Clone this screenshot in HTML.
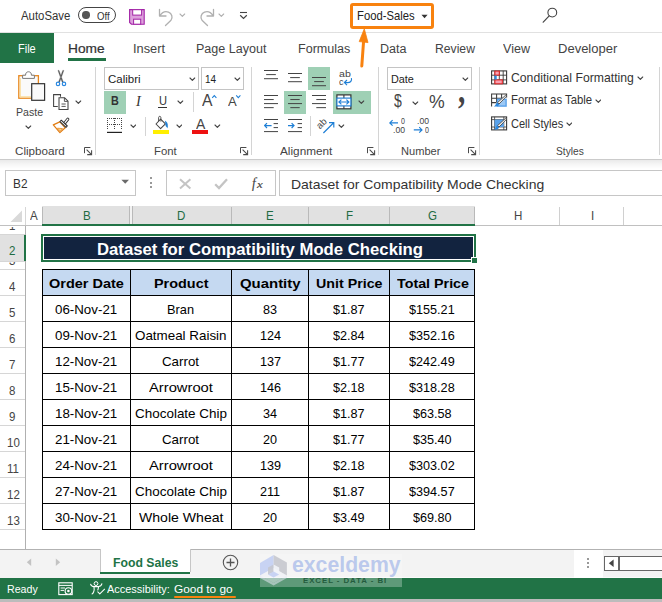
<!DOCTYPE html>
<html lang="en"><head><meta charset="utf-8"><title>Food-Sales - Excel</title><style>
html,body{margin:0;padding:0;}
body{width:662px;height:602px;overflow:hidden;background:#fff;position:relative;font-family:"Liberation Sans",sans-serif;}
.r{position:absolute;display:block;}
.t{position:absolute;white-space:pre;transform-origin:0 0;display:block;}
</style></head><body>
<div class="r" style="left:0px;top:32px;width:662px;height:1px;background:#e1e1e1;"></div>
<span class="t" style="left:21.30px;top:10.14px;font:normal 400 12.00px/1 'Liberation Sans',sans-serif;color:#333;transform:scaleX(0.9491);">AutoSave</span>
<div class="r" style="left:78px;top:7px;width:36px;height:14px;border:1px solid #444;border-radius:8px;"></div>
<div class="r" style="left:82.2px;top:11.3px;width:7.4px;height:7.4px;background:#555;border-radius:50%;"></div>
<span class="t" style="left:96.90px;top:10.63px;font:normal 400 10.60px/1 'Liberation Sans',sans-serif;color:#333;transform:scaleX(0.9071);">Off</span>
<svg class="r" style="left:128px;top:8px;" width="18" height="18" viewBox="0 0 18 18"><path d="M1.6 1.6 H16.2 V16.2 H3.4 L1.6 14.4 Z" fill="#dda0dc" stroke="#a224a6" stroke-width="1.1" stroke-linejoin="miter"/><rect x="4.7" y="1.7" width="8.9" height="5.4" fill="#fff" stroke="#a224a6" stroke-width="1"/><rect x="5.6" y="11.2" width="7.1" height="5" fill="#fff" stroke="#a224a6" stroke-width="1"/></svg>
<svg class="r" style="left:157.7px;top:7.7px;" width="18" height="19" viewBox="0 0 18 19"><path d="M1.5 1.5 V8 H8 M1.8 7.8 C4 4.5 7.5 3 10.5 4.2 C14 5.6 15 9.5 13 12.2 L7.5 17.5" fill="none" stroke="#b0b0b0" stroke-width="1.3" stroke-linecap="round" stroke-linejoin="round"/></svg>
<svg class="r" style="left:179.15px;top:13.3px;" width="6.7" height="4.4" viewBox="0 0 6.7 4.4"><path d="M1 1 L3.35 3.4 L5.7 1" fill="none" stroke="#b0b0b0" stroke-width="1.1" stroke-linecap="round" stroke-linejoin="round"/></svg>
<svg class="r" style="left:196.5px;top:7.7px;" width="18" height="19" viewBox="0 0 18 19"><path d="M16.5 1.5 V8 H10 M16.2 7.8 C14 4.5 10.5 3 7.5 4.2 C4 5.6 3 9.5 5 12.2 L10.5 17.5" fill="none" stroke="#b0b0b0" stroke-width="1.3" stroke-linecap="round" stroke-linejoin="round"/></svg>
<svg class="r" style="left:218.15px;top:13.3px;" width="6.7" height="4.4" viewBox="0 0 6.7 4.4"><path d="M1 1 L3.35 3.4 L5.7 1" fill="none" stroke="#b0b0b0" stroke-width="1.1" stroke-linecap="round" stroke-linejoin="round"/></svg>
<svg class="r" style="left:239px;top:11px;" width="9" height="9" viewBox="0 0 9 9"><path d="M1 1.5 H8" stroke="#444" stroke-width="1.1"/><path d="M1.2 4.2 L4.5 7.4 L7.8 4.2" fill="none" stroke="#444" stroke-width="1.2"/></svg>
<div class="r" style="left:350px;top:3px;width:77.6px;height:20px;border:3px solid #f8820f;border-radius:3px;"></div>
<span class="t" style="left:357.40px;top:9.86px;font:normal 400 12.80px/1 'Liberation Sans',sans-serif;color:#222;transform:scaleX(0.8801);">Food-Sales</span>
<svg class="r" style="left:421px;top:13.8px;" width="8" height="6" viewBox="0 0 8 6"><path d="M0.5 0.8 H6.6 L3.55 4.2 Z" fill="#333"/></svg>
<svg class="r" style="left:541px;top:5px;" width="18" height="20" viewBox="0 0 18 20"><circle cx="11.3" cy="7.6" r="4.4" fill="none" stroke="#444" stroke-width="1.1"/><path d="M8.2 10.8 L2.2 17.2" stroke="#444" stroke-width="1.2" stroke-linecap="round"/></svg>
<div class="r" style="left:0px;top:33px;width:54px;height:29.5px;background:#217346;"></div>
<span class="t" style="left:17.50px;top:42.79px;font:normal 400 12.30px/1 'Liberation Sans',sans-serif;color:#fff;transform:scaleX(0.8939);">File</span>
<span class="t" style="left:68.20px;top:42.79px;font:normal 400 12.30px/1 'Liberation Sans',sans-serif;color:#333;transform:scaleX(1.1159);-webkit-text-stroke:0.2px #333;">Home</span>
<div class="r" style="left:68.3px;top:57.6px;width:37.7px;height:3.2px;background:#217346;"></div>
<span class="t" style="left:133.00px;top:42.79px;font:normal 400 12.30px/1 'Liberation Sans',sans-serif;color:#444;transform:scaleX(1.0407);">Insert</span>
<span class="t" style="left:196.30px;top:42.79px;font:normal 400 12.30px/1 'Liberation Sans',sans-serif;color:#444;transform:scaleX(1.0196);">Page Layout</span>
<span class="t" style="left:297.60px;top:42.79px;font:normal 400 12.30px/1 'Liberation Sans',sans-serif;color:#444;transform:scaleX(1.0224);">Formulas</span>
<span class="t" style="left:379.50px;top:42.79px;font:normal 400 12.30px/1 'Liberation Sans',sans-serif;color:#444;transform:scaleX(1.0192);">Data</span>
<span class="t" style="left:435.00px;top:42.79px;font:normal 400 12.30px/1 'Liberation Sans',sans-serif;color:#444;transform:scaleX(0.9901);">Review</span>
<span class="t" style="left:502.70px;top:42.79px;font:normal 400 12.30px/1 'Liberation Sans',sans-serif;color:#444;transform:scaleX(1.0189);">View</span>
<span class="t" style="left:558.30px;top:42.79px;font:normal 400 12.30px/1 'Liberation Sans',sans-serif;color:#444;transform:scaleX(1.0580);">Developer</span>
<svg class="r" style="left:354px;top:26px;" width="20" height="44" viewBox="0 0 20 44"><path d="M10.3 2.8 L5.2 15.6 L14 16.6 Z" fill="#f8820f" stroke="#f8820f" stroke-width="0.8" stroke-linejoin="round"/><path d="M9.6 15 L7.8 40" stroke="#f8820f" stroke-width="3" stroke-linecap="round"/></svg>
<div class="r" style="left:0;top:159px;width:662px;height:10px;background:linear-gradient(#cbcbcb 0,#cbcbcb 1px,#ebebeb 1.5px,#f5f5f5 5px,#fff 10px);"></div>
<div class="r" style="left:95px;top:67px;width:1px;height:88px;background:#d4d4d4;"></div>
<div class="r" style="left:251px;top:67px;width:1px;height:88px;background:#d4d4d4;"></div>
<div class="r" style="left:378px;top:67px;width:1px;height:88px;background:#d4d4d4;"></div>
<div class="r" style="left:479px;top:67px;width:1px;height:88px;background:#d4d4d4;"></div>
<div class="r" style="left:659px;top:67px;width:1px;height:88px;background:#d4d4d4;"></div>
<svg class="r" style="left:17px;top:70px;" width="30" height="32" viewBox="0 0 30 32"><rect x="1.8" y="5.7" width="19.6" height="22.5" fill="#fafafa" stroke="#e8871e" stroke-width="1.3"/><path d="M3.2 8 V26.8 H14" fill="none" stroke="#fbdc9a" stroke-width="1.2"/>
<path d="M5.6 8.4 V5.2 H8.6 C8.2 0.6 14.8 0.6 14.4 5.2 H17.4 V8.4 Z" fill="#fff" stroke="#7a7a7a" stroke-width="1"/>
<rect x="14.7" y="13.7" width="12.9" height="16.6" fill="#fafafa" stroke="#333" stroke-width="1.2"/></svg>
<span class="t" style="left:15.70px;top:106.56px;font:normal 400 10.80px/1 'Liberation Sans',sans-serif;color:#444;transform:scaleX(0.9819);">Paste</span>
<svg class="r" style="left:24.95px;top:125.1px;" width="6.7" height="4.4" viewBox="0 0 6.7 4.4"><path d="M1 1 L3.35 3.4 L5.7 1" fill="none" stroke="#444" stroke-width="1.1" stroke-linecap="round" stroke-linejoin="round"/></svg>
<svg class="r" style="left:55px;top:69px;" width="14" height="18" viewBox="0 0 14 18"><path d="M3.0 1.4 L4.0 1.4 L8.2 12.9 L7.2 13.2 Z M8.8 1.4 L7.8 1.4 L3.6 12.9 L4.6 13.2 Z" fill="#555" stroke="#555" stroke-width="0.4"/><circle cx="3.0" cy="14.9" r="1.7" fill="none" stroke="#2b88e0" stroke-width="1.2"/><circle cx="9.0" cy="14.9" r="1.7" fill="none" stroke="#2b88e0" stroke-width="1.2"/></svg>
<svg class="r" style="left:52px;top:93px;" width="18" height="18" viewBox="0 0 18 18"><path d="M5.8 13.5 H1.6 V1.6 H8.5 V3.8" fill="none" stroke="#444" stroke-width="1.05"/><path d="M7 4.8 H12.6 L16 8.2 V16.4 H7 Z" fill="#fff" stroke="#444" stroke-width="1.05"/><path d="M12.4 5 V8.4 H15.8" fill="none" stroke="#444" stroke-width="0.9"/><path d="M9.5 11 H13.7 M9.5 13.4 H13.7" stroke="#444" stroke-width="0.9"/></svg>
<svg class="r" style="left:75.35px;top:100.2px;" width="6.7" height="4.4" viewBox="0 0 6.7 4.4"><path d="M1 1 L3.35 3.4 L5.7 1" fill="none" stroke="#444" stroke-width="1.1" stroke-linecap="round" stroke-linejoin="round"/></svg>
<svg class="r" style="left:52px;top:117px;" width="18" height="17" viewBox="52 117 18 17"><path d="M59.8 121.9 L53.3 124.9 L59.9 132.6 L65.2 127.8 Z" fill="#fff" stroke="#e27d12" stroke-width="1.2" stroke-linejoin="round"/><path d="M57.4 128.2 L60.4 131.2 L62.6 128.6 Z" fill="#fbd98a" stroke="#e27d12" stroke-width="0.7" stroke-linejoin="round"/><path d="M64.4 123.4 L67.8 119.2" stroke="#3a3a3a" stroke-width="3.1" stroke-linecap="round"/><path d="M64.2 123.7 L67.8 119.2" stroke="#fff" stroke-width="1.3" stroke-linecap="round"/><path d="M61.3 120.2 L67.3 126 L66 127.4 L60 121.6 Z" fill="#fff" stroke="#333" stroke-width="1.05" stroke-linejoin="round"/></svg>
<span class="t" style="left:14.80px;top:145.86px;font:normal 400 10.80px/1 'Liberation Sans',sans-serif;color:#444;transform:scaleX(1.0768);">Clipboard</span>
<svg class="r" style="left:83.8px;top:147.1px;" width="9" height="9" viewBox="0 0 9 9"><path d="M0.5 6.2 V0.5 H6.4" fill="none" stroke="#4a4a4a" stroke-width="1"/><path d="M2.6 2.6 L7.3 7.3 M7.6 3.2 V7.6 H3.2" fill="none" stroke="#4a4a4a" stroke-width="1.05"/></svg>
<div class="r" style="left:104px;top:67px;width:93px;height:21px;border:1px solid #c4c4c4;background:#fff;"></div>
<div class="r" style="left:201px;top:67px;width:41px;height:21px;border:1px solid #c4c4c4;background:#fff;"></div>
<span class="t" style="left:107.80px;top:72.98px;font:normal 400 11.60px/1 'Liberation Sans',sans-serif;color:#222;transform:scaleX(0.9909);">Calibri</span>
<svg class="r" style="left:189.15px;top:77.3px;" width="6.7" height="4.4" viewBox="0 0 6.7 4.4"><path d="M1 1 L3.35 3.4 L5.7 1" fill="none" stroke="#444" stroke-width="1.1" stroke-linecap="round" stroke-linejoin="round"/></svg>
<span class="t" style="left:204.90px;top:72.98px;font:normal 400 11.60px/1 'Liberation Sans',sans-serif;color:#222;transform:scaleX(0.8605);">14</span>
<svg class="r" style="left:234.15px;top:77.3px;" width="6.7" height="4.4" viewBox="0 0 6.7 4.4"><path d="M1 1 L3.35 3.4 L5.7 1" fill="none" stroke="#444" stroke-width="1.1" stroke-linecap="round" stroke-linejoin="round"/></svg>
<div class="r" style="left:104px;top:91px;width:22.3px;height:22.6px;background:#9fd0b5;"></div>
<span class="t" style="left:111.40px;top:95.34px;font:normal 700 12.00px/1 'Liberation Sans',sans-serif;color:#333;transform:scaleX(0.9017);">B</span>
<span class="t" style="left:136.10px;top:93.56px;font:italic 400 14.50px/1 'Liberation Serif',serif;color:#333;transform:scaleX(0.9818);">I</span>
<span class="t" style="left:158.80px;top:94.84px;font:normal 400 12.00px/1 'Liberation Sans',sans-serif;color:#333;transform:scaleX(0.9249);">U</span>
<div class="r" style="left:158.3px;top:107px;width:9px;height:1px;background:#333;"></div>
<svg class="r" style="left:176.95px;top:99.8px;" width="6.7" height="4.4" viewBox="0 0 6.7 4.4"><path d="M1 1 L3.35 3.4 L5.7 1" fill="none" stroke="#444" stroke-width="1.1" stroke-linecap="round" stroke-linejoin="round"/></svg>
<div class="r" style="left:193px;top:92px;width:1px;height:20px;background:#d4d4d4;"></div>
<span class="t" style="left:202.20px;top:92.21px;font:normal 400 17.00px/1 'Liberation Sans',sans-serif;color:#444;transform:scaleX(0.9251);">A</span>
<svg class="r" style="left:210.8px;top:94px;" width="7" height="5" viewBox="0 0 7 5"><path d="M1.2 3.9 L3.3 1.6 L5.4 3.9" fill="none" stroke="#1e7fd6" stroke-width="1.05"/></svg>
<span class="t" style="left:227.50px;top:95.76px;font:normal 400 12.80px/1 'Liberation Sans',sans-serif;color:#444;transform:scaleX(1.0175);">A</span>
<svg class="r" style="left:234.9px;top:94px;" width="7" height="5" viewBox="0 0 7 5"><path d="M1.2 1.4 L3.3 3.7 L5.4 1.4" fill="none" stroke="#1e7fd6" stroke-width="1.05"/></svg>
<svg class="r" style="left:106px;top:117px;" width="17" height="17" viewBox="0 0 17 17"><path d="M1 1.5 H16 M1 7.5 H16 M1.5 1 V13 M8.5 1 V13 M15.5 1 V13" fill="none" stroke="#444" stroke-width="1" stroke-dasharray="1 1"/><rect x="1" y="14.8" width="15" height="1.2" fill="#222"/></svg>
<svg class="r" style="left:129.65px;top:124.1px;" width="6.7" height="4.4" viewBox="0 0 6.7 4.4"><path d="M1 1 L3.35 3.4 L5.7 1" fill="none" stroke="#444" stroke-width="1.1" stroke-linecap="round" stroke-linejoin="round"/></svg>
<div class="r" style="left:145px;top:116.5px;width:1px;height:19.5px;background:#d4d4d4;"></div>
<svg class="r" style="left:153px;top:115px;" width="18" height="15" viewBox="0 0 18 15"><path d="M7.6 4.2 L12.4 8.8 L7.6 13.6 L3 9 Z" fill="#fff" stroke="#444" stroke-width="1.05" stroke-linejoin="round"/><path d="M7.9 6.6 V2.6 C7.9 0.9 5.6 0.9 5.6 2.6 V6.2" fill="none" stroke="#444" stroke-width="0.9"/><path d="M12.3 6.2 C13.8 6.6 15 9.6 14.4 12.6 C13 11.8 12.6 10 12.8 8.6 Z" fill="#1e7fd6" stroke="#1e7fd6" stroke-width="0.7"/></svg>
<div class="r" style="left:153px;top:130px;width:15.9px;height:3.9px;background:#ffef00;"></div>
<svg class="r" style="left:175.65px;top:124.1px;" width="6.7" height="4.4" viewBox="0 0 6.7 4.4"><path d="M1 1 L3.35 3.4 L5.7 1" fill="none" stroke="#444" stroke-width="1.1" stroke-linecap="round" stroke-linejoin="round"/></svg>
<span class="t" style="left:195.50px;top:116.58px;font:normal 400 14.20px/1 'Liberation Sans',sans-serif;color:#444;transform:scaleX(0.9841);">A</span>
<div class="r" style="left:191.7px;top:130px;width:16.1px;height:3.7px;background:#ee1111;"></div>
<svg class="r" style="left:214.15px;top:124.2px;" width="6.7" height="4.4" viewBox="0 0 6.7 4.4"><path d="M1 1 L3.35 3.4 L5.7 1" fill="none" stroke="#444" stroke-width="1.1" stroke-linecap="round" stroke-linejoin="round"/></svg>
<span class="t" style="left:153.70px;top:145.86px;font:normal 400 10.80px/1 'Liberation Sans',sans-serif;color:#444;transform:scaleX(1.0509);">Font</span>
<svg class="r" style="left:239.8px;top:147.1px;" width="9" height="9" viewBox="0 0 9 9"><path d="M0.5 6.2 V0.5 H6.4" fill="none" stroke="#4a4a4a" stroke-width="1"/><path d="M2.6 2.6 L7.3 7.3 M7.6 3.2 V7.6 H3.2" fill="none" stroke="#4a4a4a" stroke-width="1.05"/></svg>
<svg class="r" style="left:264px;top:69.8px;" width="14" height="13.3" viewBox="0 0 14 13.3"><rect x="0" y="0" width="14" height="1" fill="#444"/><rect x="2.15" y="4.1" width="9.7" height="1" fill="#444"/><rect x="0" y="8.2" width="14" height="1" fill="#444"/></svg>
<svg class="r" style="left:288px;top:72.8px;" width="14" height="13.3" viewBox="0 0 14 13.3"><rect x="0" y="0" width="14" height="1" fill="#444"/><rect x="2.15" y="4.1" width="9.7" height="1" fill="#444"/><rect x="0" y="8.2" width="14" height="1" fill="#444"/></svg>
<div class="r" style="left:308px;top:67px;width:22.1px;height:23px;background:#9fd0b5;"></div>
<svg class="r" style="left:312.2px;top:76.9px;" width="14" height="13.3" viewBox="0 0 14 13.3"><rect x="0" y="0" width="14" height="1" fill="#444"/><rect x="2.15" y="4.1" width="9.7" height="1" fill="#444"/><rect x="0" y="8.2" width="14" height="1" fill="#444"/></svg>
<span class="t" style="left:338.60px;top:70.07px;font:normal 400 8.30px/1 'Liberation Sans',sans-serif;color:#444;transform:scaleX(1.2757);">ab</span>
<span class="t" style="left:338.60px;top:77.57px;font:normal 400 8.30px/1 'Liberation Sans',sans-serif;color:#444;transform:scaleX(1.0843);">c</span>
<svg class="r" style="left:343px;top:76.5px;" width="10" height="9" viewBox="0 0 10 9"><path d="M8.4 1.2 C9.2 4.2 7.2 5.6 4.6 5.6 H1.4 M4 3 L1.4 5.6 L4 8.2" fill="none" stroke="#1e7fd6" stroke-width="1.15"/></svg>
<svg class="r" style="left:264px;top:94.9px;" width="14" height="17.2" viewBox="0 0 14 17.2"><rect x="0" y="0" width="14" height="1" fill="#444"/><rect x="0" y="4.05" width="9.7" height="1" fill="#444"/><rect x="0" y="8.1" width="14" height="1" fill="#444"/><rect x="0" y="12.15" width="9.7" height="1" fill="#444"/></svg>
<div class="r" style="left:284px;top:91px;width:22px;height:22.9px;background:#9fd0b5;"></div>
<svg class="r" style="left:288px;top:94.9px;" width="14" height="17.2" viewBox="0 0 14 17.2"><rect x="0" y="0" width="14" height="1" fill="#444"/><rect x="2.3" y="4.05" width="9.4" height="1" fill="#444"/><rect x="0" y="8.1" width="14" height="1" fill="#444"/><rect x="2.3" y="12.15" width="9.4" height="1" fill="#444"/></svg>
<svg class="r" style="left:312.2px;top:94.9px;" width="14" height="17.2" viewBox="0 0 14 17.2"><rect x="0" y="0" width="14" height="1" fill="#444"/><rect x="4.3" y="4.05" width="9.7" height="1" fill="#444"/><rect x="0" y="8.1" width="14" height="1" fill="#444"/><rect x="4.3" y="12.15" width="9.7" height="1" fill="#444"/></svg>
<div class="r" style="left:332.9px;top:91px;width:38px;height:22.9px;background:#9fd0b5;"></div>
<svg class="r" style="left:335.5px;top:93.7px;" width="16" height="16" viewBox="0 0 16 16"><rect x="0.9" y="0.9" width="14" height="13.9" fill="#fff" stroke="#333" stroke-width="1.2"/><path d="M7.9 0.9 V14.8" stroke="#333" stroke-width="1.1"/><rect x="0.9" y="4.1" width="14" height="7.8" fill="#fff" stroke="#1e7fd6" stroke-width="1.15"/><path d="M2.9 8 H12.9 M5.4 5.6 L2.9 8 L5.4 10.4 M10.4 5.6 L12.9 8 L10.4 10.4" fill="none" stroke="#1e7fd6" stroke-width="1.15"/></svg>
<svg class="r" style="left:357.95px;top:100.2px;" width="6.7" height="4.4" viewBox="0 0 6.7 4.4"><path d="M1 1 L3.35 3.4 L5.7 1" fill="none" stroke="#444" stroke-width="1.1" stroke-linecap="round" stroke-linejoin="round"/></svg>
<svg class="r" style="left:264px;top:118.8px;" width="15" height="14" viewBox="0 0 15 14"><path d="M0 0.5 H14 M9.6 4.6 H14 M9.6 8.6 H14 M0 12.6 H14" stroke="#444" stroke-width="1"/><path d="M0.6 6.6 H7.6 M3 4.2 L0.6 6.6 L3 9" fill="none" stroke="#1e7fd6" stroke-width="1.2"/></svg>
<svg class="r" style="left:288px;top:118.8px;" width="15" height="14" viewBox="0 0 15 14"><path d="M0 0.5 H14 M9.6 4.6 H14 M9.6 8.6 H14 M0 12.6 H14" stroke="#444" stroke-width="1"/><path d="M0 6.6 H6 M3.6 4.2 L6 6.6 L3.6 9" fill="none" stroke="#1e7fd6" stroke-width="1.2"/></svg>
<div class="r" style="left:309.8px;top:116.3px;width:1px;height:19.7px;background:#d4d4d4;"></div>
<span class="t" style="left:321px;top:120.6px;font:400 9.5px/1 'Liberation Sans',sans-serif;color:#444;transform:rotate(-45deg);transform-origin:0 100%;">ab</span>
<svg class="r" style="left:319px;top:120px;" width="18" height="15" viewBox="0 0 18 15"><path d="M4.4 13 L14.4 3 M10 2.6 L14.8 2.6 L14.8 7.4" fill="none" stroke="#1e7fd6" stroke-width="1.15"/></svg>
<svg class="r" style="left:338.05px;top:124.4px;" width="6.7" height="4.4" viewBox="0 0 6.7 4.4"><path d="M1 1 L3.35 3.4 L5.7 1" fill="none" stroke="#444" stroke-width="1.1" stroke-linecap="round" stroke-linejoin="round"/></svg>
<span class="t" style="left:280.20px;top:145.86px;font:normal 400 10.80px/1 'Liberation Sans',sans-serif;color:#444;transform:scaleX(1.0905);">Alignment</span>
<svg class="r" style="left:367px;top:147.1px;" width="9" height="9" viewBox="0 0 9 9"><path d="M0.5 6.2 V0.5 H6.4" fill="none" stroke="#4a4a4a" stroke-width="1"/><path d="M2.6 2.6 L7.3 7.3 M7.6 3.2 V7.6 H3.2" fill="none" stroke="#4a4a4a" stroke-width="1.05"/></svg>
<div class="r" style="left:387px;top:67px;width:83px;height:21px;border:1px solid #c4c4c4;background:#fff;"></div>
<span class="t" style="left:390.70px;top:72.98px;font:normal 400 11.60px/1 'Liberation Sans',sans-serif;color:#222;transform:scaleX(0.9347);">Date</span>
<svg class="r" style="left:462.25px;top:77.3px;" width="6.7" height="4.4" viewBox="0 0 6.7 4.4"><path d="M1 1 L3.35 3.4 L5.7 1" fill="none" stroke="#444" stroke-width="1.1" stroke-linecap="round" stroke-linejoin="round"/></svg>
<span class="t" style="left:393.60px;top:92.50px;font:normal 400 17.60px/1 'Liberation Sans',sans-serif;color:#444;transform:scaleX(0.7959);">$</span>
<svg class="r" style="left:412.25px;top:100.8px;" width="6.7" height="4.4" viewBox="0 0 6.7 4.4"><path d="M1 1 L3.35 3.4 L5.7 1" fill="none" stroke="#444" stroke-width="1.1" stroke-linecap="round" stroke-linejoin="round"/></svg>
<span class="t" style="left:429.30px;top:93.59px;font:normal 400 17.50px/1 'Liberation Sans',sans-serif;color:#444;transform:scaleX(1.0096);">%</span>
<span class="t" style="left:458.30px;top:70.86px;font:normal 700 38.50px/1 'Liberation Serif',serif;color:#444;transform:scaleX(0.7565);">,</span>
<svg class="r" style="left:389.4px;top:118.5px;" width="10" height="8" viewBox="0 0 10 8"><path d="M0.8 3.9 H9 M3.6 1.1 L0.8 3.9 L3.6 6.7" fill="none" stroke="#1e7fd6" stroke-width="1.15"/></svg>
<span class="t" style="left:401.10px;top:117.47px;font:normal 400 8.30px/1 'Liberation Sans',sans-serif;color:#444;transform:scaleX(0.8478);">0</span>
<span class="t" style="left:393.00px;top:125.67px;font:normal 400 8.30px/1 'Liberation Sans',sans-serif;color:#444;transform:scaleX(1.0390);">.00</span>
<span class="t" style="left:416.80px;top:117.47px;font:normal 400 8.30px/1 'Liberation Sans',sans-serif;color:#444;transform:scaleX(1.0390);">.00</span>
<svg class="r" style="left:413.4px;top:126.3px;" width="10" height="8" viewBox="0 0 10 8"><path d="M0.8 3.9 H9 M6.2 1.1 L9 3.9 L6.2 6.7" fill="none" stroke="#1e7fd6" stroke-width="1.15"/></svg>
<span class="t" style="left:424.90px;top:125.67px;font:normal 400 8.30px/1 'Liberation Sans',sans-serif;color:#444;transform:scaleX(0.8478);">0</span>
<span class="t" style="left:400.80px;top:145.86px;font:normal 400 10.80px/1 'Liberation Sans',sans-serif;color:#444;transform:scaleX(1.0260);">Number</span>
<svg class="r" style="left:468.2px;top:147.1px;" width="9" height="9" viewBox="0 0 9 9"><path d="M0.5 6.2 V0.5 H6.4" fill="none" stroke="#4a4a4a" stroke-width="1"/><path d="M2.6 2.6 L7.3 7.3 M7.6 3.2 V7.6 H3.2" fill="none" stroke="#4a4a4a" stroke-width="1.05"/></svg>
<svg class="r" style="left:491px;top:69.5px;" width="17" height="15" viewBox="0 0 17 15"><rect x="0.6" y="0.9" width="15" height="13" fill="#fff" stroke="#3a3a3a" stroke-width="1.1"/><path d="M3.9 0.9 V13.9 M8.3 0.9 V13.9 M12.2 0.9 V13.9 M0.6 5.2 H15.6 M0.6 9.9 H15.6" stroke="#3a3a3a" stroke-width="0.9"/><rect x="3.9" y="1.1" width="4.4" height="4" fill="#f8a0b0" stroke="#e02020" stroke-width="1"/><rect x="3.9" y="9.9" width="7.4" height="3.9" fill="#f8a0b0" stroke="#e02020" stroke-width="1"/><rect x="3.5" y="5.6" width="2.2" height="3.9" fill="#2b88e0"/></svg>
<svg class="r" style="left:491px;top:92.6px;" width="17" height="16" viewBox="0 0 17 16"><path d="M0.6 13.6 V0.9 H15.6 V4.6 M0.6 5.3 H13 M0.6 9.6 H5.6 M5.6 0.9 V9 M10.6 0.9 V5.3" fill="none" stroke="#3a3a3a" stroke-width="1.05"/><path d="M5.8 5.6 H15.8 V13.8 H5.8 Z" fill="#5aa2ea"/><path d="M7.2 7 H14.4 V12.4 H7.2 Z" fill="#9cc8f4"/><path d="M15.2 3.6 C16 2.8 15 1.8 14.2 2.6 L6.6 9.6 L8 11 Z" fill="#fff" stroke="#444" stroke-width="0.9"/><path d="M6.2 9.4 L8.2 11.4 C7 13.6 4.6 13.8 2.8 13.4 C4.6 12.6 4.6 10.6 6.2 9.4 Z" fill="#2b88e0"/></svg>
<svg class="r" style="left:491px;top:115.6px;" width="17" height="16" viewBox="0 0 17 16"><rect x="0.6" y="0.9" width="15" height="13" fill="#fff" stroke="#3a3a3a" stroke-width="1.1"/><path d="M0.6 3.6 H15.6 M3.6 0.9 V13.9 M0.6 11 H15.6 M12.8 0.9 V13.9" stroke="#3a3a3a" stroke-width="0.8"/><rect x="3.6" y="3.6" width="9.2" height="7.4" fill="#5aa2ea"/><path d="M15.2 3.6 C16 2.8 15 1.8 14.2 2.6 L6.6 9.6 L8 11 Z" fill="#fff" stroke="#444" stroke-width="0.9"/><path d="M6.2 9.4 L8.2 11.4 C7 13.6 4.6 13.8 2.8 13.4 C4.6 12.6 4.6 10.6 6.2 9.4 Z" fill="#2b88e0"/></svg>
<span class="t" style="left:510.70px;top:71.56px;font:normal 400 12.10px/1 'Liberation Sans',sans-serif;color:#333;transform:scaleX(1.0094);">Conditional Formatting</span>
<svg class="r" style="left:637.05px;top:75.6px;" width="6.7" height="4.4" viewBox="0 0 6.7 4.4"><path d="M1 1 L3.35 3.4 L5.7 1" fill="none" stroke="#444" stroke-width="1.1" stroke-linecap="round" stroke-linejoin="round"/></svg>
<span class="t" style="left:510.70px;top:94.36px;font:normal 400 12.10px/1 'Liberation Sans',sans-serif;color:#333;transform:scaleX(0.9382);">Format as Table</span>
<svg class="r" style="left:594.65px;top:98.8px;" width="6.7" height="4.4" viewBox="0 0 6.7 4.4"><path d="M1 1 L3.35 3.4 L5.7 1" fill="none" stroke="#444" stroke-width="1.1" stroke-linecap="round" stroke-linejoin="round"/></svg>
<span class="t" style="left:510.70px;top:117.66px;font:normal 400 12.10px/1 'Liberation Sans',sans-serif;color:#333;transform:scaleX(0.9134);">Cell Styles</span>
<svg class="r" style="left:565.65px;top:121.8px;" width="6.7" height="4.4" viewBox="0 0 6.7 4.4"><path d="M1 1 L3.35 3.4 L5.7 1" fill="none" stroke="#444" stroke-width="1.1" stroke-linecap="round" stroke-linejoin="round"/></svg>
<span class="t" style="left:555.60px;top:145.86px;font:normal 400 10.80px/1 'Liberation Sans',sans-serif;color:#444;transform:scaleX(0.9456);">Styles</span>
<div class="r" style="left:5px;top:170px;width:129px;height:24px;border:1px solid #c6c6c6;background:#fff;"></div>
<span class="t" style="left:12.50px;top:177.84px;font:normal 400 12.00px/1 'Liberation Sans',sans-serif;color:#333;transform:scaleX(0.9864);">B2</span>
<svg class="r" style="left:121px;top:179px;" width="9" height="6" viewBox="0 0 9 6"><path d="M0.4 0.7 H8 L4.2 4.8 Z" fill="#6a6a6a"/></svg>
<div class="r" style="left:150px;top:177.3px;width:2px;height:2px;background:#999;"></div>
<div class="r" style="left:150px;top:181.6px;width:2px;height:2px;background:#999;"></div>
<div class="r" style="left:150px;top:186px;width:2px;height:2px;background:#999;"></div>
<div class="r" style="left:166px;top:170px;width:108px;height:24px;border:1px solid #c6c6c6;background:#fff;"></div>
<svg class="r" style="left:179px;top:178px;" width="13" height="12" viewBox="0 0 13 12"><path d="M1 1.2 L11.4 10.4 M11.4 1.2 L1 10.4" stroke="#c4c4c4" stroke-width="2"/></svg>
<svg class="r" style="left:214px;top:178px;" width="14" height="12" viewBox="0 0 14 12"><path d="M1.2 6.2 L5 10 L13 1.2" fill="none" stroke="#c4c4c4" stroke-width="2.3"/></svg>
<span class="t" style="left:252.30px;top:176.58px;font:italic 400 14.00px/1 'Liberation Serif',serif;color:#444;transform:scaleX(0.9369);-webkit-text-stroke:0.15px #444;">f</span>
<span class="t" style="left:257.00px;top:180.64px;font:italic 400 9.50px/1 'Liberation Serif',serif;color:#444;transform:scaleX(1.3563);-webkit-text-stroke:0.15px #444;">x</span>
<div class="r" style="left:279px;top:170px;width:390px;height:24px;border:1px solid #c6c6c6;background:#fff;"></div>
<span class="t" style="left:290.90px;top:177.60px;font:normal 400 13.00px/1 'Liberation Sans',sans-serif;color:#333;transform:scaleX(1.0749);">Dataset for Compatibility Mode Checking</span>
<div class="r" style="left:42px;top:206px;width:432.5px;height:19px;background:#e1e1e1;"></div>
<span class="t" style="left:29.94px;top:210.13px;font:normal 400 12.60px/1 'Liberation Sans',sans-serif;color:#444;transform:scaleX(0.9200);">A</span>
<span class="t" style="left:82.84px;top:210.13px;font:normal 400 12.60px/1 'Liberation Sans',sans-serif;color:#1e6b41;transform:scaleX(0.9200);">B</span>
<span class="t" style="left:177.01px;top:210.13px;font:normal 400 12.60px/1 'Liberation Sans',sans-serif;color:#1e6b41;transform:scaleX(0.9200);">D</span>
<span class="t" style="left:266.34px;top:210.13px;font:normal 400 12.60px/1 'Liberation Sans',sans-serif;color:#1e6b41;transform:scaleX(0.9200);">E</span>
<span class="t" style="left:345.66px;top:210.13px;font:normal 400 12.60px/1 'Liberation Sans',sans-serif;color:#1e6b41;transform:scaleX(0.9200);">F</span>
<span class="t" style="left:427.94px;top:210.13px;font:normal 400 12.60px/1 'Liberation Sans',sans-serif;color:#1e6b41;transform:scaleX(0.9200);">G</span>
<span class="t" style="left:513.66px;top:210.13px;font:normal 400 12.60px/1 'Liberation Sans',sans-serif;color:#444;transform:scaleX(0.9200);">H</span>
<span class="t" style="left:590.74px;top:210.13px;font:normal 400 12.60px/1 'Liberation Sans',sans-serif;color:#444;transform:scaleX(0.9200);">I</span>
<div class="r" style="left:42px;top:207px;width:1px;height:18px;background:#b9b9b9;"></div>
<div class="r" style="left:231px;top:207px;width:1px;height:18px;background:#b9b9b9;"></div>
<div class="r" style="left:308px;top:207px;width:1px;height:18px;background:#b9b9b9;"></div>
<div class="r" style="left:389px;top:207px;width:1px;height:18px;background:#b9b9b9;"></div>
<div class="r" style="left:474px;top:207px;width:1px;height:18px;background:#b9b9b9;"></div>
<div class="r" style="left:129px;top:206px;width:1px;height:19px;background:#b9b9b9;"></div>
<div class="r" style="left:132px;top:206px;width:1px;height:19px;background:#b9b9b9;"></div>
<div class="r" style="left:130px;top:206px;width:2px;height:19px;background:#f2f2f2;"></div>
<div class="r" style="left:559px;top:207px;width:1px;height:18px;background:#d0d0d0;"></div>
<div class="r" style="left:623px;top:207px;width:1px;height:18px;background:#d0d0d0;"></div>
<div class="r" style="left:25px;top:207px;width:1px;height:19px;background:#d6d6d6;"></div>
<div class="r" style="left:25px;top:226px;width:1px;height:323px;background:#b0b0b0;"></div>
<div class="r" style="left:0px;top:225px;width:662px;height:1px;background:#c0c0c0;"></div>
<div class="r" style="left:42px;top:224px;width:433px;height:2px;background:#217346;"></div>
<svg class="r" style="left:8.8px;top:210.3px;" width="14" height="13" viewBox="0 0 14 13"><path d="M13 0.5 V12 H1.5 Z" fill="#d9d9d9"/></svg>
<div class="r" style="left:0px;top:235px;width:25.5px;height:25.5px;background:#e1e1e1;"></div>
<div class="r" style="left:24px;top:234.7px;width:2px;height:26px;background:#217346;"></div>
<div class="r" style="left:0px;top:234px;width:25px;height:1px;background:#d6d6d6;"></div>
<div class="r" style="left:0px;top:261px;width:25px;height:1px;background:#d6d6d6;"></div>
<div class="r" style="left:0px;top:269px;width:25px;height:1px;background:#d6d6d6;"></div>
<div class="r" style="left:0px;top:295px;width:25px;height:1px;background:#d6d6d6;"></div>
<div class="r" style="left:0px;top:321px;width:25px;height:1px;background:#d6d6d6;"></div>
<div class="r" style="left:0px;top:347px;width:25px;height:1px;background:#d6d6d6;"></div>
<div class="r" style="left:0px;top:373px;width:25px;height:1px;background:#d6d6d6;"></div>
<div class="r" style="left:0px;top:399px;width:25px;height:1px;background:#d6d6d6;"></div>
<div class="r" style="left:0px;top:425px;width:25px;height:1px;background:#d6d6d6;"></div>
<div class="r" style="left:0px;top:451px;width:25px;height:1px;background:#d6d6d6;"></div>
<div class="r" style="left:0px;top:477px;width:25px;height:1px;background:#d6d6d6;"></div>
<div class="r" style="left:0px;top:503px;width:25px;height:1px;background:#d6d6d6;"></div>
<div class="r" style="left:0px;top:529px;width:25px;height:1px;background:#d6d6d6;"></div>
<div class="r" style="left:0;top:226.5px;width:25px;height:7.5px;overflow:hidden;"><span class="t" style="left:9.40px;top:-6.24px;font:400 12.8px/1 &quot;Liberation Sans&quot;,sans-serif;color:#444;transform:scaleX(0.9000);">1</span></div>
<div class="r" style="left:0;top:234.5px;width:25px;height:26.5px;overflow:hidden;"><span class="t" style="left:9.40px;top:10.26px;font:400 12.8px/1 &quot;Liberation Sans&quot;,sans-serif;color:#1e6b41;transform:scaleX(0.9000);">2</span></div>
<div class="r" style="left:0;top:261.5px;width:25px;height:7.5px;overflow:hidden;"><span class="t" style="left:9.40px;top:-6.24px;font:400 12.8px/1 &quot;Liberation Sans&quot;,sans-serif;color:#444;transform:scaleX(0.9000);">3</span></div>
<div class="r" style="left:0;top:269.5px;width:25px;height:25.5px;overflow:hidden;"><span class="t" style="left:9.40px;top:11.76px;font:400 12.8px/1 &quot;Liberation Sans&quot;,sans-serif;color:#444;transform:scaleX(0.9000);">4</span></div>
<div class="r" style="left:0;top:295.5px;width:25px;height:25.5px;overflow:hidden;"><span class="t" style="left:9.40px;top:11.76px;font:400 12.8px/1 &quot;Liberation Sans&quot;,sans-serif;color:#444;transform:scaleX(0.9000);">5</span></div>
<div class="r" style="left:0;top:321.5px;width:25px;height:25.5px;overflow:hidden;"><span class="t" style="left:9.40px;top:11.76px;font:400 12.8px/1 &quot;Liberation Sans&quot;,sans-serif;color:#444;transform:scaleX(0.9000);">6</span></div>
<div class="r" style="left:0;top:347.5px;width:25px;height:25.5px;overflow:hidden;"><span class="t" style="left:9.40px;top:11.76px;font:400 12.8px/1 &quot;Liberation Sans&quot;,sans-serif;color:#444;transform:scaleX(0.9000);">7</span></div>
<div class="r" style="left:0;top:373.5px;width:25px;height:25.5px;overflow:hidden;"><span class="t" style="left:9.40px;top:11.76px;font:400 12.8px/1 &quot;Liberation Sans&quot;,sans-serif;color:#444;transform:scaleX(0.9000);">8</span></div>
<div class="r" style="left:0;top:399.5px;width:25px;height:25.5px;overflow:hidden;"><span class="t" style="left:9.40px;top:11.76px;font:400 12.8px/1 &quot;Liberation Sans&quot;,sans-serif;color:#444;transform:scaleX(0.9000);">9</span></div>
<div class="r" style="left:0;top:425.5px;width:25px;height:25.5px;overflow:hidden;"><span class="t" style="left:6.59px;top:11.76px;font:400 12.8px/1 &quot;Liberation Sans&quot;,sans-serif;color:#444;transform:scaleX(0.9000);">10</span></div>
<div class="r" style="left:0;top:451.5px;width:25px;height:25.5px;overflow:hidden;"><span class="t" style="left:7.01px;top:11.76px;font:400 12.8px/1 &quot;Liberation Sans&quot;,sans-serif;color:#444;transform:scaleX(0.9000);">11</span></div>
<div class="r" style="left:0;top:477.5px;width:25px;height:25.5px;overflow:hidden;"><span class="t" style="left:6.59px;top:11.76px;font:400 12.8px/1 &quot;Liberation Sans&quot;,sans-serif;color:#444;transform:scaleX(0.9000);">12</span></div>
<div class="r" style="left:0;top:503.5px;width:25px;height:25.5px;overflow:hidden;"><span class="t" style="left:6.59px;top:11.76px;font:400 12.8px/1 &quot;Liberation Sans&quot;,sans-serif;color:#444;transform:scaleX(0.9000);">13</span></div>
<div class="r" style="left:41px;top:233.5px;width:435px;height:28.5px;background:#217346;"></div>
<div class="r" style="left:43px;top:235.5px;width:431px;height:24.5px;background:#fff;"></div>
<div class="r" style="left:44px;top:236.5px;width:429px;height:22.5px;background:#12233f;"></div>
<div class="r" style="left:471px;top:257px;width:7px;height:7px;background:#fff;"></div>
<div class="r" style="left:472px;top:258px;width:5px;height:5px;background:#217346;"></div>
<span class="t" style="left:96.50px;top:240.63px;font:normal 700 16.50px/1 'Liberation Sans',sans-serif;color:#fff;transform:scaleX(1.0131);">Dataset for Compatibility Mode Checking</span>
<div class="r" style="left:42px;top:269px;width:433px;height:27px;background:#000;"></div>
<div class="r" style="left:43px;top:270px;width:431px;height:25px;background:#c5d9f1;"></div>
<div class="r" style="left:42px;top:295px;width:433px;height:235px;background:#000;"></div>
<div class="r" style="left:43px;top:296px;width:431px;height:233px;background:#fff;"></div>
<div class="r" style="left:130px;top:269px;width:1px;height:261px;background:#000;"></div>
<div class="r" style="left:231px;top:269px;width:1px;height:261px;background:#000;"></div>
<div class="r" style="left:308px;top:269px;width:1px;height:261px;background:#000;"></div>
<div class="r" style="left:389px;top:269px;width:1px;height:261px;background:#000;"></div>
<div class="r" style="left:42px;top:321px;width:433px;height:1px;background:#000;"></div>
<div class="r" style="left:42px;top:347px;width:433px;height:1px;background:#000;"></div>
<div class="r" style="left:42px;top:373px;width:433px;height:1px;background:#000;"></div>
<div class="r" style="left:42px;top:399px;width:433px;height:1px;background:#000;"></div>
<div class="r" style="left:42px;top:425px;width:433px;height:1px;background:#000;"></div>
<div class="r" style="left:42px;top:451px;width:433px;height:1px;background:#000;"></div>
<div class="r" style="left:42px;top:477px;width:433px;height:1px;background:#000;"></div>
<div class="r" style="left:42px;top:503px;width:433px;height:1px;background:#000;"></div>
<div class="r" style="left:42px;top:529px;width:433px;height:1px;background:#000;"></div>
<span class="t" style="left:49.40px;top:276.80px;font:normal 700 13.00px/1 'Liberation Sans',sans-serif;color:#000;transform:scaleX(1.1146);">Order Date</span>
<span class="t" style="left:154.00px;top:276.80px;font:normal 700 13.00px/1 'Liberation Sans',sans-serif;color:#000;transform:scaleX(1.1100);">Product</span>
<span class="t" style="left:240.00px;top:276.80px;font:normal 700 13.00px/1 'Liberation Sans',sans-serif;color:#000;transform:scaleX(1.1480);">Quantity</span>
<span class="t" style="left:316.00px;top:276.80px;font:normal 700 13.00px/1 'Liberation Sans',sans-serif;color:#000;transform:scaleX(1.0956);">Unit Price</span>
<span class="t" style="left:396.50px;top:276.80px;font:normal 700 13.00px/1 'Liberation Sans',sans-serif;color:#000;transform:scaleX(1.0992);">Total Price</span>
<span class="t" style="left:54.90px;top:303.20px;font:normal 400 13.00px/1 'Liberation Sans',sans-serif;color:#000;transform:scaleX(1.0247);">06-Nov-21</span>
<span class="t" style="left:167.00px;top:303.20px;font:normal 400 13.00px/1 'Liberation Sans',sans-serif;color:#000;transform:scaleX(0.9836);">Bran</span>
<span class="t" style="left:263.18px;top:303.20px;font:normal 400 13.00px/1 'Liberation Sans',sans-serif;color:#000;transform:scaleX(0.9720);">83</span>
<span class="t" style="left:333.38px;top:303.20px;font:normal 400 13.00px/1 'Liberation Sans',sans-serif;color:#000;transform:scaleX(0.9720);">$1.87</span>
<span class="t" style="left:409.36px;top:303.20px;font:normal 400 13.00px/1 'Liberation Sans',sans-serif;color:#000;transform:scaleX(0.9720);">$155.21</span>
<span class="t" style="left:54.90px;top:329.20px;font:normal 400 13.00px/1 'Liberation Sans',sans-serif;color:#000;transform:scaleX(1.0247);">09-Nov-21</span>
<span class="t" style="left:135.45px;top:329.20px;font:normal 400 13.00px/1 'Liberation Sans',sans-serif;color:#000;transform:scaleX(1.0298);">Oatmeal Raisin</span>
<span class="t" style="left:259.65px;top:329.20px;font:normal 400 13.00px/1 'Liberation Sans',sans-serif;color:#000;transform:scaleX(0.9720);">124</span>
<span class="t" style="left:333.38px;top:329.20px;font:normal 400 13.00px/1 'Liberation Sans',sans-serif;color:#000;transform:scaleX(0.9720);">$2.84</span>
<span class="t" style="left:409.36px;top:329.20px;font:normal 400 13.00px/1 'Liberation Sans',sans-serif;color:#000;transform:scaleX(0.9720);">$352.16</span>
<span class="t" style="left:54.90px;top:355.20px;font:normal 400 13.00px/1 'Liberation Sans',sans-serif;color:#000;transform:scaleX(1.0247);">12-Nov-21</span>
<span class="t" style="left:162.00px;top:355.20px;font:normal 400 13.00px/1 'Liberation Sans',sans-serif;color:#000;transform:scaleX(1.0249);">Carrot</span>
<span class="t" style="left:259.65px;top:355.20px;font:normal 400 13.00px/1 'Liberation Sans',sans-serif;color:#000;transform:scaleX(0.9720);">137</span>
<span class="t" style="left:333.38px;top:355.20px;font:normal 400 13.00px/1 'Liberation Sans',sans-serif;color:#000;transform:scaleX(0.9720);">$1.77</span>
<span class="t" style="left:409.36px;top:355.20px;font:normal 400 13.00px/1 'Liberation Sans',sans-serif;color:#000;transform:scaleX(0.9720);">$242.49</span>
<span class="t" style="left:54.90px;top:381.20px;font:normal 400 13.00px/1 'Liberation Sans',sans-serif;color:#000;transform:scaleX(1.0247);">15-Nov-21</span>
<span class="t" style="left:149.25px;top:381.20px;font:normal 400 13.00px/1 'Liberation Sans',sans-serif;color:#000;transform:scaleX(1.1340);">Arrowroot</span>
<span class="t" style="left:259.65px;top:381.20px;font:normal 400 13.00px/1 'Liberation Sans',sans-serif;color:#000;transform:scaleX(0.9720);">146</span>
<span class="t" style="left:333.38px;top:381.20px;font:normal 400 13.00px/1 'Liberation Sans',sans-serif;color:#000;transform:scaleX(0.9720);">$2.18</span>
<span class="t" style="left:409.36px;top:381.20px;font:normal 400 13.00px/1 'Liberation Sans',sans-serif;color:#000;transform:scaleX(0.9720);">$318.28</span>
<span class="t" style="left:54.90px;top:407.20px;font:normal 400 13.00px/1 'Liberation Sans',sans-serif;color:#000;transform:scaleX(1.0247);">18-Nov-21</span>
<span class="t" style="left:135.20px;top:407.20px;font:normal 400 13.00px/1 'Liberation Sans',sans-serif;color:#000;transform:scaleX(1.0349);">Chocolate Chip</span>
<span class="t" style="left:263.18px;top:407.20px;font:normal 400 13.00px/1 'Liberation Sans',sans-serif;color:#000;transform:scaleX(0.9720);">34</span>
<span class="t" style="left:333.38px;top:407.20px;font:normal 400 13.00px/1 'Liberation Sans',sans-serif;color:#000;transform:scaleX(0.9720);">$1.87</span>
<span class="t" style="left:412.88px;top:407.20px;font:normal 400 13.00px/1 'Liberation Sans',sans-serif;color:#000;transform:scaleX(0.9720);">$63.58</span>
<span class="t" style="left:54.90px;top:433.20px;font:normal 400 13.00px/1 'Liberation Sans',sans-serif;color:#000;transform:scaleX(1.0247);">21-Nov-21</span>
<span class="t" style="left:162.00px;top:433.20px;font:normal 400 13.00px/1 'Liberation Sans',sans-serif;color:#000;transform:scaleX(1.0249);">Carrot</span>
<span class="t" style="left:263.18px;top:433.20px;font:normal 400 13.00px/1 'Liberation Sans',sans-serif;color:#000;transform:scaleX(0.9720);">20</span>
<span class="t" style="left:333.38px;top:433.20px;font:normal 400 13.00px/1 'Liberation Sans',sans-serif;color:#000;transform:scaleX(0.9720);">$1.77</span>
<span class="t" style="left:412.88px;top:433.20px;font:normal 400 13.00px/1 'Liberation Sans',sans-serif;color:#000;transform:scaleX(0.9720);">$35.40</span>
<span class="t" style="left:54.90px;top:459.20px;font:normal 400 13.00px/1 'Liberation Sans',sans-serif;color:#000;transform:scaleX(1.0247);">24-Nov-21</span>
<span class="t" style="left:149.25px;top:459.20px;font:normal 400 13.00px/1 'Liberation Sans',sans-serif;color:#000;transform:scaleX(1.1340);">Arrowroot</span>
<span class="t" style="left:259.65px;top:459.20px;font:normal 400 13.00px/1 'Liberation Sans',sans-serif;color:#000;transform:scaleX(0.9720);">139</span>
<span class="t" style="left:333.38px;top:459.20px;font:normal 400 13.00px/1 'Liberation Sans',sans-serif;color:#000;transform:scaleX(0.9720);">$2.18</span>
<span class="t" style="left:409.36px;top:459.20px;font:normal 400 13.00px/1 'Liberation Sans',sans-serif;color:#000;transform:scaleX(0.9720);">$303.02</span>
<span class="t" style="left:54.90px;top:485.20px;font:normal 400 13.00px/1 'Liberation Sans',sans-serif;color:#000;transform:scaleX(1.0247);">27-Nov-21</span>
<span class="t" style="left:135.20px;top:485.20px;font:normal 400 13.00px/1 'Liberation Sans',sans-serif;color:#000;transform:scaleX(1.0349);">Chocolate Chip</span>
<span class="t" style="left:260.14px;top:485.20px;font:normal 400 13.00px/1 'Liberation Sans',sans-serif;color:#000;transform:scaleX(0.9720);">211</span>
<span class="t" style="left:333.38px;top:485.20px;font:normal 400 13.00px/1 'Liberation Sans',sans-serif;color:#000;transform:scaleX(0.9720);">$1.87</span>
<span class="t" style="left:409.36px;top:485.20px;font:normal 400 13.00px/1 'Liberation Sans',sans-serif;color:#000;transform:scaleX(0.9720);">$394.57</span>
<span class="t" style="left:54.90px;top:511.20px;font:normal 400 13.00px/1 'Liberation Sans',sans-serif;color:#000;transform:scaleX(1.0247);">30-Nov-21</span>
<span class="t" style="left:138.95px;top:511.20px;font:normal 400 13.00px/1 'Liberation Sans',sans-serif;color:#000;transform:scaleX(1.0826);">Whole Wheat</span>
<span class="t" style="left:263.18px;top:511.20px;font:normal 400 13.00px/1 'Liberation Sans',sans-serif;color:#000;transform:scaleX(0.9720);">20</span>
<span class="t" style="left:333.38px;top:511.20px;font:normal 400 13.00px/1 'Liberation Sans',sans-serif;color:#000;transform:scaleX(0.9720);">$3.49</span>
<span class="t" style="left:412.88px;top:511.20px;font:normal 400 13.00px/1 'Liberation Sans',sans-serif;color:#000;transform:scaleX(0.9720);">$69.80</span>
<div class="r" style="left:0px;top:549px;width:662px;height:29px;background:#f3f3f3;"></div>
<div class="r" style="left:0px;top:549px;width:662px;height:1px;background:#b2b2b2;"></div>
<div class="r" style="left:190px;top:577px;width:472px;height:1px;background:#fbfbfb;"></div>
<div class="r" style="left:100.5px;top:549px;width:89px;height:23px;background:#fff;"></div>
<div class="r" style="left:100px;top:549px;width:1px;height:23px;background:#c6c6c6;"></div>
<div class="r" style="left:189.5px;top:549px;width:1px;height:23px;background:#c6c6c6;"></div>
<div class="r" style="left:100px;top:572px;width:90px;height:2px;background:#217346;"></div>
<span class="t" style="left:112.60px;top:555.80px;font:normal 700 13.00px/1 'Liberation Sans',sans-serif;color:#217346;transform:scaleX(0.9416);">Food Sales</span>
<svg class="r" style="left:26px;top:558px;" width="6" height="9" viewBox="0 0 6 9"><path d="M5.2 0.6 V8 L0.8 4.3 Z" fill="#c3c3c3"/></svg>
<svg class="r" style="left:55px;top:558px;" width="6" height="9" viewBox="0 0 6 9"><path d="M0.8 0.6 V8 L5.2 4.3 Z" fill="#c3c3c3"/></svg>
<svg class="r" style="left:222px;top:554px;" width="17" height="17" viewBox="0 0 17 17"><circle cx="8.5" cy="8.5" r="7.2" fill="none" stroke="#555" stroke-width="1.1"/><path d="M8.5 4.5 V12.5 M4.5 8.5 H12.5" stroke="#555" stroke-width="1.3"/></svg>
<div class="r" style="left:574px;top:550px;width:28.5px;height:28px;background:#fff;"></div>
<div class="r" style="left:586.8px;top:558.2px;width:2px;height:2px;background:#999;"></div>
<div class="r" style="left:586.8px;top:562.2px;width:2px;height:2px;background:#999;"></div>
<div class="r" style="left:586.8px;top:566.1px;width:2px;height:2px;background:#999;"></div>
<div class="r" style="left:604px;top:556px;width:60px;height:13px;border:1px solid #666;background:#fff;"></div>
<div class="r" style="left:618.2px;top:556px;width:1.7px;height:15px;background:#666;"></div>
<svg class="r" style="left:607.5px;top:559.3px;" width="7" height="9" viewBox="0 0 7 9"><path d="M5.6 0.6 V8 L0.8 4.3 Z" fill="#444"/></svg>
<div class="r" style="left:0px;top:578px;width:662px;height:21.6px;background:#217346;"></div>
<div class="r" style="left:0px;top:599px;width:662px;height:3px;background:#bcbcbc;"></div>
<span class="t" style="left:7.20px;top:583.55px;font:normal 400 11.40px/1 'Liberation Sans',sans-serif;color:#fff;transform:scaleX(0.9347);">Ready</span>
<svg class="r" style="left:57.5px;top:581.5px;" width="16" height="14" viewBox="0 0 16 14"><rect x="0.8" y="0.8" width="13.4" height="11.8" fill="none" stroke="#fff" stroke-width="1.1"/><path d="M0.8 3.4 H14.2 M2.6 6 H7 M2.6 8.4 H6" stroke="#fff" stroke-width="1"/><circle cx="10.4" cy="9" r="3.3" fill="#217346" stroke="#fff" stroke-width="1.1"/><circle cx="10.4" cy="9" r="1.3" fill="#fff"/></svg>
<svg class="r" style="left:89px;top:581px;" width="17" height="15" viewBox="0 0 17 15"><circle cx="7" cy="2.6" r="1.9" fill="none" stroke="#fff" stroke-width="1"/><path d="M1.6 3.2 C2 5 3.4 5.6 5 5.6 H9.6 C11.4 5.4 12.6 4.6 12.9 2.7 M5 5.6 C5.4 8 5 10 4.6 11 C4.2 12 3.8 12.6 3 12.9 M9.6 5.6 C9.4 7 9.2 8 8.8 9 M8.8 10.9 L10.8 12.9 L15.6 8.2" fill="none" stroke="#fff" stroke-width="1.05" stroke-linecap="round" stroke-linejoin="round"/></svg>
<span class="t" style="left:107.20px;top:583.62px;font:normal 400 11.20px/1 'Liberation Sans',sans-serif;color:#fff;transform:scaleX(0.9797);">Accessibility:</span>
<span class="t" style="left:174.30px;top:583.62px;font:normal 400 11.20px/1 'Liberation Sans',sans-serif;color:#fff;transform:scaleX(1.0596);">Good to go</span>
<div class="r" style="left:174.3px;top:595.6px;width:61.8px;height:2.4px;background:#f8820f;border-radius:1.2px;"></div>
<div class="r" style="left:259.7px;top:554px;width:142px;height:24px;background:rgba(255,255,255,0.22);"></div>
<div class="r" style="left:259.7px;top:578px;width:142px;height:8.7px;background:rgba(255,255,255,0.28);"></div>
<svg class="r" style="left:259px;top:554px;" width="30" height="33" viewBox="259 554 30 33"><path d="M273.6 555.1 L260 563 V575.4 L273.6 568 Z" fill="#c3cff3" opacity="0.9"/><path d="M273.6 555.1 L286.9 562.6 V575.4 L273.6 568 Z" fill="#c6c8ce" opacity="0.9"/><path d="M260 575.4 V577.9 L273.6 585.6 L286.9 577.9 V575.4 L273.6 583 Z" fill="#e4e8f2" opacity="0.55"/><path d="M260 575.4 L273.6 568 L286.9 575.4 L273.6 583 Z" fill="#edf0f7" opacity="0.5"/><path d="M268 567.6 L273.6 564.6 V572 L268 574.6 Z" fill="#c4c7cf" opacity="0.9"/><path d="M273.6 564.6 L279.2 567.6 V574.6 L273.6 572 Z" fill="#f2f4f8" opacity="0.9"/><path d="M268 574.6 L273.6 571.6 L279.2 574.6 L273.6 577.4 Z" fill="#c3cff3" opacity="0.9"/></svg>
<span class="t" style="left:292.40px;top:555.30px;font:normal 700 21.50px/1 'Liberation Sans',sans-serif;color:rgba(158,178,232,0.68);transform:scaleX(0.9877);">exceldemy</span>
<span class="t" style="left:302.80px;top:577.54px;font:normal 700 6.80px/1 'Liberation Sans',sans-serif;color:rgba(24,80,50,0.85);transform:scaleX(1.1580);letter-spacing:0.80px;">EXCEL - DATA - BI</span>
</body></html>
